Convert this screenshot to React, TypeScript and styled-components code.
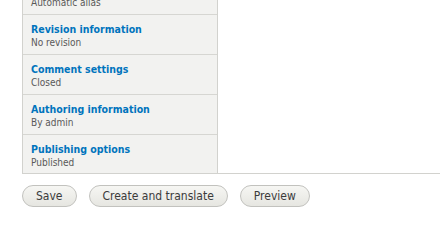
import React from "react";
import styled, { createGlobalStyle } from "styled-components";

const GlobalStyle = createGlobalStyle`
  html, body {
    margin: 0;
    padding: 0;
    background: #ffffff;
    overflow: hidden;
  }
  body {
    font-family: "DejaVu Sans Condensed", "Liberation Sans", sans-serif;
    color: #333333;
  }
`;

const tabs = [
  { title: "URL alias", summary: "Automatic alias" },
  { title: "Revision information", summary: "No revision" },
  { title: "Comment settings", summary: "Closed" },
  { title: "Authoring information", summary: "By admin" },
  { title: "Publishing options", summary: "Published" },
];

const App = () => {
  return (
    <Page>
      <GlobalStyle />
      <VerticalTabs>
        <TabList>
          {tabs.map((tab) => (
            <Tab key={tab.title}>
              <TabTitle href="#">{tab.title}</TabTitle>
              <TabSummary>{tab.summary}</TabSummary>
            </Tab>
          ))}
        </TabList>
        <TabPane />
      </VerticalTabs>
      <Actions>
        <Button>Save</Button>
        <Button>Create and translate</Button>
        <Button>Preview</Button>
      </Actions>
    </Page>
  );
};

export default App;

const Page = styled.div`
  padding: 0 0 0 22px;
`;

const VerticalTabs = styled.div`
  display: flex;
  margin-top: -26px;
  margin-right: -10px;
  border: 1px solid #d2d2ce;
  background: #ffffff;
`;

const TabList = styled.ul`
  list-style: none;
  margin: 0;
  padding: 0;
  width: 194px;
  background: #f2f2f0;
  border-right: 1px solid #d2d2ce;
`;

const Tab = styled.li`
  height: 40px;
  box-sizing: border-box;
  padding: 6px 8px 0;
  border-bottom: 1px solid #d6d6d2;
  &:last-child {
    border-bottom: none;
    height: 38px;
  }
`;

const TabTitle = styled.a`
  display: block;
  font-size: 10.5px;
  font-weight: bold;
  line-height: 16px;
  color: #0074bd;
  text-decoration: none;
  white-space: nowrap;
`;

const TabSummary = styled.div`
  font-size: 10px;
  line-height: 12px;
  color: #595959;
  white-space: nowrap;
`;

const TabPane = styled.div`
  flex: 1;
  background: #ffffff;
`;

const Actions = styled.div`
  display: flex;
  gap: 12px;
  padding-top: 11px;
`;

const Button = styled.button`
  height: 22px;
  padding: 0 13px;
  border: 1px solid #c2c2be;
  border-radius: 20em;
  background: linear-gradient(to bottom, #f6f6f3, #e6e6e1);
  color: #3b3b3b;
  font-family: "DejaVu Sans Condensed", "Liberation Sans", sans-serif;
  font-size: 12px;
  line-height: 20px;
  cursor: pointer;
`;
